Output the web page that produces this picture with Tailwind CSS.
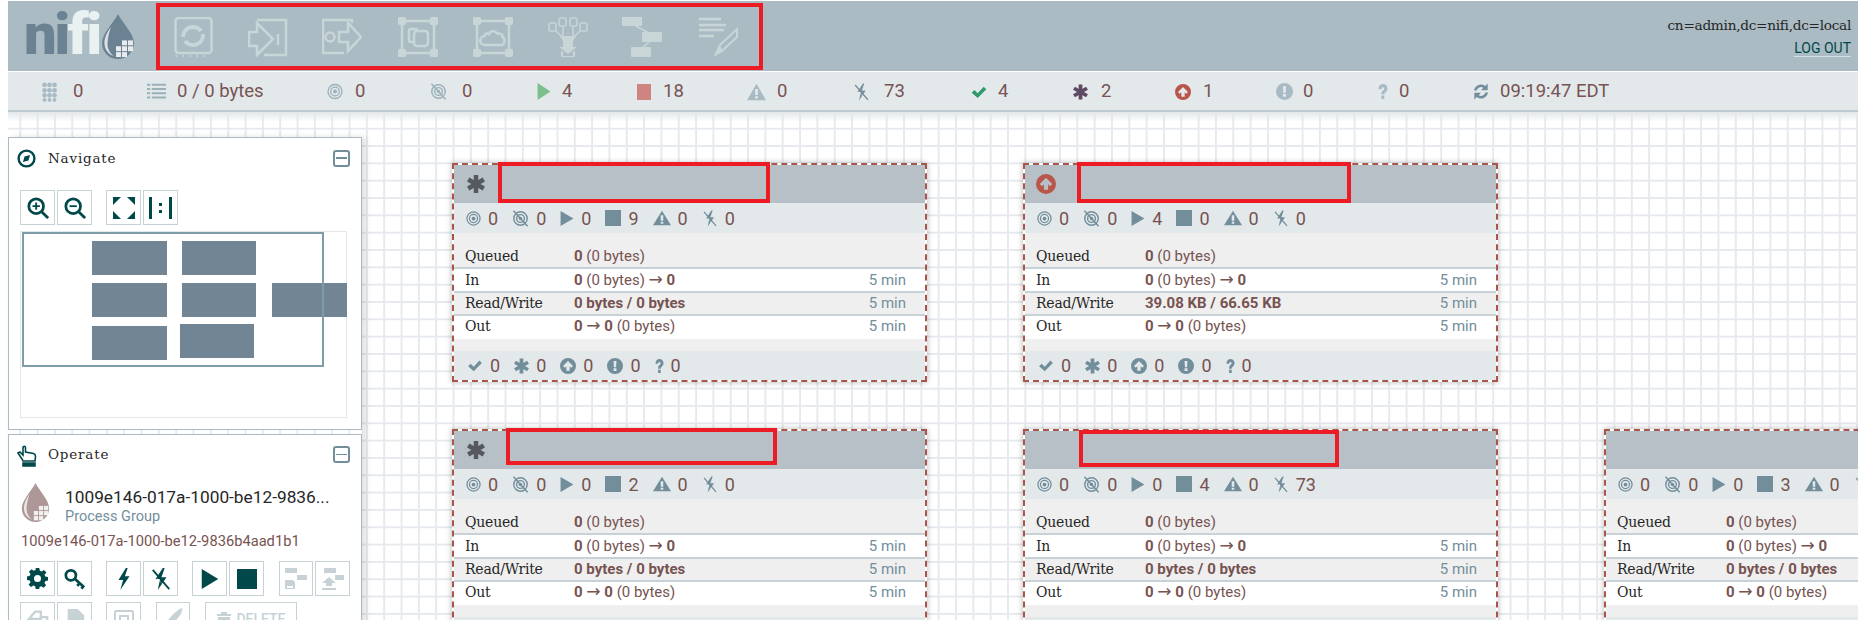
<!DOCTYPE html>
<html lang="en">
<head>
  <meta charset="UTF-8">
  <title>NiFi Flow</title>
  <script src="https://cdn.jsdelivr.net/npm/@tailwindcss/browser@4"></script>
</head>
<body class="bg-white font-['Roboto',sans-serif] overflow-hidden">
  <!-- Shared icons -->
  <svg class="hidden" xmlns="http://www.w3.org/2000/svg">
    <symbol id="target" viewBox="0 0 24 24"><g fill="none" stroke="currentColor" stroke-width="2"><circle cx="12" cy="12" r="10.500"/><circle cx="12" cy="12" r="6.500"/></g><circle cx="12" cy="12" r="3" fill="currentColor"/></symbol>
    <symbol id="target-off" viewBox="0 0 24 24"><g fill="none" stroke="currentColor" stroke-width="2"><circle cx="12" cy="12" r="9.500"/><circle cx="12" cy="12" r="5.500"/><path d="M2 1l20 22"/></g><circle cx="12" cy="12" r="2.500" fill="currentColor"/></symbol>
    <symbol id="play" viewBox="0 0 24 24" preserveAspectRatio="none"><path d="M1 0l22 12L1 24z" fill="currentColor"/></symbol>
    <symbol id="stop" viewBox="0 0 24 24" preserveAspectRatio="none"><rect width="24" height="24" fill="currentColor"/></symbol>
    <symbol id="warn" viewBox="0 0 24 24" preserveAspectRatio="none"><path fill-rule="evenodd" d="M12 1l12 22H0zM10.300 8v8h3.400V8zm0 9.500v3.300h3.400v-3.300z" fill="currentColor"/></symbol>
    <symbol id="bolt-off" viewBox="0 0 24 24"><path d="M14 0L6 12h5L8.500 24 18 10h-5.500L16 0z" fill="currentColor"/><path d="M3 2l18 21" stroke="currentColor" stroke-width="2"/><path d="M1 3l18 21" stroke="#ffffff" stroke-opacity=".35" stroke-width="1"/></symbol>
    <symbol id="bolt" viewBox="0 0 24 24"><path d="M14 0L6 13h5L8 24l10-15h-5l3-9z" fill="currentColor"/></symbol>
    <symbol id="check" viewBox="0 0 24 24"><path d="M1 13l4-4 5 5L19 4l4 4L10 21z" fill="currentColor"/></symbol>
    <symbol id="asterisk" viewBox="0 0 24 24"><path d="M12 0v24M1.600 6l20.800 12M22.400 6L1.600 18" fill="none" stroke="currentColor" stroke-width="6"/></symbol>
    <symbol id="up" viewBox="0 0 24 24"><path fill-rule="evenodd" d="M12 0a12 12 0 1 0 0 24a12 12 0 0 0 0-24zM12 4.500l7.500 7.500-2.700 2.700-2.300-2.300V19h-5v-6.600l-2.300 2.300L4.500 12z" fill="currentColor"/></symbol>
    <symbol id="exclaim" viewBox="0 0 24 24"><path fill-rule="evenodd" d="M12 0a12 12 0 1 0 0 24a12 12 0 0 0 0-24zM9.800 4.500h4.400l-.6 9.500h-3.200zm0 11h4.400v4h-4.400z" fill="currentColor"/></symbol>
    <symbol id="question" viewBox="3 0 19 24" preserveAspectRatio="none"><path d="M4 8c0-4.500 3.500-8 8.500-8C17.500 0 21 3 21 7c0 3.200-1.700 4.800-3.700 6.200-1.700 1.200-2.300 1.800-2.300 3.300H9.500c0-3.300 1.200-4.800 3-6.100 1.400-1 2.300-1.700 2.300-3 0-1.300-1-2.200-2.400-2.200-1.700 0-2.700 1.200-2.800 3zM9.500 18.500H15V24H9.500z" fill="currentColor"/></symbol>
    <symbol id="refresh" viewBox="0 0 24 24"><path d="M22 0v10h-10l3.500-3.500A6.800 6.800 0 0 0 5.300 10.500H1.500A10.500 10.500 0 0 1 18.300 3.700zM2 24V14h10l-3.500 3.500a6.800 6.800 0 0 0 10.200-4h3.800A10.500 10.500 0 0 1 5.700 20.300z" fill="currentColor"/></symbol>
    <symbol id="cluster" viewBox="0 0 20 24"><g fill="currentColor"><circle cx="4" cy="3.500" r="2.800"/><circle cx="10" cy="3.500" r="2.800"/><circle cx="16" cy="3.500" r="2.800"/><circle cx="4" cy="10" r="2.800"/><circle cx="10" cy="10" r="2.800"/><circle cx="16" cy="10" r="2.800"/><circle cx="4" cy="16" r="2.800"/><circle cx="10" cy="16" r="2.800"/><circle cx="16" cy="16" r="2.800"/><circle cx="4" cy="21.500" r="2.300"/><circle cx="10" cy="21.500" r="2.300"/><circle cx="16" cy="21.500" r="2.300"/></g></symbol>
    <symbol id="list" viewBox="0 0 24 24" preserveAspectRatio="none"><path d="M0 1h4v3H0zM6 1h18v3H6zM0 7h4v3H0zM6 7h18v3H6zM0 13h4v3H0zM6 13h18v3H6zM0 19h4v3H0zM6 19h18v3H6z" fill="currentColor"/></symbol>
    <symbol id="drop" viewBox="0 0 34 46" preserveAspectRatio="none"><path d="M17 0C12 10 1 20 1 30a16 16 0 0 0 32 0C33 20 22 10 17 0z" fill="currentColor"/><path d="M10 13C5 20 3 26 3.500 31c.5 6 4 10 9 12-3.500-3-6-7-6-12 0-6 1.500-12 3.500-18z" fill="#fff" opacity=".75"/><g fill="#fff" opacity=".85"><rect x="21" y="27" width="5" height="5"/><rect x="27" y="27" width="5" height="5"/><rect x="15" y="33" width="5" height="5"/><rect x="21" y="33" width="5" height="5"/><rect x="27" y="33" width="5" height="5"/><rect x="15" y="39" width="5" height="5"/><rect x="21" y="39" width="5" height="5"/></g></symbol>
  </svg>

  <div class="h-[620px] pl-[8px] pt-[1px] flex flex-col overflow-hidden">
    <!-- Header -->
    <header class="h-[70px] shrink-0 bg-[#aabbc3] flex relative">
      <div class="w-[148px] shrink-0 pl-[16px] pt-[2px] flex items-start">
        <div class="w-[75px] font-['Roboto',sans-serif] font-black text-[58px] leading-[62px] tracking-[-2.500px] whitespace-nowrap"><span class="text-[#6b8293]">ni</span><span class="text-[#eaf1f1]">fi</span></div>
        <svg class="w-[34px] h-[45px] mt-[11px] ml-[2px] text-[#6b8293]"><use href="#drop"/></svg>
      </div>
      <!-- Toolbar, redacted frame -->
      <div class="w-[607px] h-[67px] mt-[2px] border-[4px] border-[#ed1c24] flex items-center pl-[14px] text-[#c8d6d8]">
        <svg class="w-[40px] h-[40px] mr-[34px]" viewBox="0 0 40 40" fill="none" stroke="currentColor" stroke-width="2.500"><rect x="1.500" y="1" width="36" height="35" rx="3"/><path d="M2 38l.5 2M9 38l.5 2M16 38l.5 2M23 38l.5 2M30 38l.5 2" stroke-width="1.500"/><path d="M9 20a10 10 0 0 1 18-6M29 17a10 10 0 0 1-18 7" stroke-width="4"/></svg>
        <svg class="w-[40px] h-[40px] mr-[34px]" viewBox="0 0 40 40" fill="none" stroke="currentColor" stroke-width="2.500"><path d="M9 3h29v35H16"/><path d="M1 15h8V6l16 16-16 16v-9H1z"/><path d="M30 17v11"/></svg>
        <svg class="w-[40px] h-[40px] mr-[36px]" viewBox="0 0 40 40" fill="none" stroke="currentColor" stroke-width="2.500"><path d="M30 6V3H1v33h21"/><circle cx="8" cy="20" r="4.500"/><path d="M17 15h9V6l13 14-13 14v-9h-9z"/></svg>
        <svg class="w-[40px] h-[40px] mr-[35px]" viewBox="0 0 40 40" fill="none" stroke="currentColor" stroke-width="2.500"><path d="M7 4h26M7 36h26M4 7v26M36 7v26"/><rect x="1" y="1" width="6" height="6" rx="1.500" fill="currentColor"/><rect x="33" y="1" width="6" height="6" rx="1.500" fill="currentColor"/><rect x="1" y="33" width="6" height="6" rx="1.500" fill="currentColor"/><rect x="33" y="33" width="6" height="6" rx="1.500" fill="currentColor"/><path d="M20 12h-7a2 2 0 0 0-2 2v9a2 2 0 0 0 2 2h3"/><rect x="16" y="14" width="14" height="15" rx="3"/></svg>
        <svg class="w-[40px] h-[40px] mr-[35px]" viewBox="0 0 40 40" fill="none" stroke="currentColor" stroke-width="2.500"><path d="M7 4h26M7 36h26M4 7v26M36 7v26"/><rect x="1" y="1" width="6" height="6" rx="1.500" fill="currentColor"/><rect x="33" y="1" width="6" height="6" rx="1.500" fill="currentColor"/><rect x="1" y="33" width="6" height="6" rx="1.500" fill="currentColor"/><rect x="33" y="33" width="6" height="6" rx="1.500" fill="currentColor"/><path d="M12 28a4.500 4.500 0 0 1-.5-9c.5-3 3-3 4.500-2 1-3 6-4 8-.5 4-.5 6 1.500 5.500 3.500 3 1 2.500 8-1.500 8z"/></svg>
        <svg class="w-[40px] h-[40px] mr-[34px]" viewBox="0 0 40 40" fill="none" stroke="currentColor" stroke-width="1.500"><rect x="1" y="6" width="7" height="8" rx="1.500"/><rect x="11" y="1" width="7" height="8" rx="1.500"/><rect x="22" y="1" width="7" height="8" rx="1.500"/><rect x="32" y="6" width="7" height="8" rx="1.500"/><path d="M8 14l6 6M15 9v10M25 9v10M32 14l-6 6"/><path d="M12 19h16l-3 5v6h4l-9 7-9-7h4v-6z" fill="currentColor" stroke="none"/><path d="M14 34v6h12v-6" stroke-width="2"/></svg>
        <svg class="w-[40px] h-[40px] mr-[36px]" viewBox="0 0 40 40" fill="currentColor"><rect x="0" y="0" width="20" height="9" rx="1"/><rect x="20" y="15" width="20" height="10" rx="1"/><rect x="9" y="30" width="20" height="10" rx="1"/><path d="M14 9l13 7M27 25l-7 6" stroke="currentColor" stroke-width="1.500"/></svg>
        <svg class="w-[40px] h-[40px]" viewBox="0 0 40 40" fill="none" stroke="currentColor"><path d="M1 2h22M1 8h27M1 13h25M1 19h15" stroke-width="2.500"/><path d="M18 37l4-9 17-16v8L25 33z" stroke-width="2"/><path d="M18 38l7-4-4-5z" fill="currentColor"/></svg>
      </div>
      <div class="ml-auto pr-[7px] pt-[15px] flex flex-col items-end">
        <div class="font-['DejaVu_Serif',serif] text-[13.700px] leading-[18px] text-[#262626] tracking-[-.3px]">cn=admin,dc=nifi,dc=local</div>
        <div class="mt-[7px] text-[14px] leading-[15px] text-[#004849] border-b border-[#d5e0e4]">LOG OUT</div>
      </div>
    </header>

    <!-- Stats bar -->
    <div class="h-[40px] shrink-0 mt-[1px] pt-[1px] bg-[#e3e8eb] border-b-2 border-[#bccbd2] flex items-center pl-[32px] text-[18.500px] text-[#775351]">
      <div class="w-[107px] flex items-center gap-[14px]"><svg class="w-[19px] h-[20px] text-[#a8bac3]"><use href="#cluster"/></svg><span>0</span></div>
      <div class="w-[180px] flex items-center gap-[11px]"><svg class="w-[19px] h-[17px] text-[#9cb0ba]"><use href="#list"/></svg><span>0 / 0 bytes</span></div>
      <div class="w-[103px] flex items-center gap-[12px]"><svg class="w-[16px] h-[17px] text-[#9cb0ba]"><use href="#target"/></svg><span>0</span></div>
      <div class="w-[107px] flex items-center gap-[15px]"><svg class="w-[17px] h-[19px] text-[#9cb0ba]"><use href="#target-off"/></svg><span>0</span></div>
      <div class="w-[100px] flex items-center gap-[11px]"><svg class="w-[14px] h-[17px] text-[#7dbf8c]"><use href="#play"/></svg><span>4</span></div>
      <div class="w-[110px] flex items-center gap-[12px]"><svg class="w-[14px] h-[16px] text-[#ce8480]"><use href="#stop"/></svg><span>18</span></div>
      <div class="w-[106px] flex items-center gap-[11px]"><svg class="w-[19px] h-[18px] text-[#a8bac3]"><use href="#warn"/></svg><span>0</span></div>
      <div class="w-[118px] flex items-center gap-[14px]"><svg class="w-[17px] h-[20px] text-[#7a929e]"><use href="#bolt-off"/></svg><span>73</span></div>
      <div class="w-[102px] flex items-center gap-[11px]"><svg class="w-[16px] h-[16px] text-[#2f9a6c]"><use href="#check"/></svg><span>4</span></div>
      <div class="w-[102px] flex items-center gap-[13px]"><svg class="w-[15px] h-[16px] text-[#5d4a63]"><use href="#asterisk"/></svg><span>2</span></div>
      <div class="w-[101px] flex items-center gap-[12px]"><svg class="w-[16px] h-[16px] text-[#ba554a]"><use href="#up"/></svg><span>1</span></div>
      <div class="w-[102px] flex items-center gap-[10px]"><svg class="w-[17px] h-[17px] text-[#a8bac3]"><use href="#exclaim"/></svg><span>0</span></div>
      <div class="w-[95px] flex items-center gap-[11px]"><svg class="w-[10px] h-[15px] text-[#a8bac3]"><use href="#question"/></svg><span>0</span></div>
      <div class="flex items-center gap-[11px]"><svg class="w-[16px] h-[17px] text-[#728e9b]"><use href="#refresh"/></svg><span>09:19:47 EDT</span></div>
    </div>

    <!-- Canvas -->
    <main id="canvas" class="relative flex-1 overflow-hidden bg-white bg-[linear-gradient(to_right,#e6eaee_1.500px,transparent_1.500px),linear-gradient(to_bottom,#e6eaee_1.500px,transparent_1.500px)] bg-[length:17.330px_17.330px] bg-[position:-6px_-1.600px]">
      <div class="absolute top-0 left-0 right-0 h-[10px] bg-gradient-to-b from-[#e3e8eb] to-transparent"></div>
    </main>
  </div>

  <script>
    // Process groups on the canvas: position, title icon, redaction frame, counts
    const groups = [
      { pos: 'left-[444px] top-[51px]', frame: 'ml-[44px] w-[272px] -mt-[3px] h-[41px]', icon: 'asterisk', stats: [0, 0, 0, 9, 0, 0], rw: '0 bytes / 0 bytes' },
      { pos: 'left-[1015px] top-[51px]', frame: 'ml-[52px] w-[274px] -mt-[3px] h-[41px]', icon: 'up', stats: [0, 0, 4, 0, 0, 0], rw: '39.08 KB / 66.65 KB' },
      { pos: 'left-[444px] top-[317px]', frame: 'ml-[52px] w-[271px] -mt-[3px] h-[37px]', icon: 'asterisk', stats: [0, 0, 0, 2, 0, 0], rw: '0 bytes / 0 bytes' },
      { pos: 'left-[1015px] top-[317px]', frame: 'ml-[54px] w-[260px] -mt-[1px] h-[37px]', icon: '', stats: [0, 0, 0, 4, 0, 73], rw: '0 bytes / 0 bytes' },
      { pos: 'left-[1596px] top-[317px]', frame: '', icon: '', stats: [0, 0, 0, 3, 0, 0], rw: '0 bytes / 0 bytes' },
    ];
    const statIcons = [
      ['target', 'w-[15px] h-[15px]'], ['target-off', 'w-[17px] h-[17px]'], ['play', 'w-[14px] h-[15px]'],
      ['stop', 'w-[16px] h-[16px]'], ['warn', 'w-[18px] h-[16px]'], ['bolt-off', 'w-[16px] h-[17px]'],
    ];
    const footIcons = [
      ['check', 'w-[16px] h-[15px]'], ['asterisk', 'w-[15px] h-[16px]'], ['up', 'w-[16px] h-[16px]'],
      ['exclaim', 'w-[16px] h-[16px]'], ['question', 'w-[9px] h-[14px]'],
    ];
    const arrow = `<span class="font-['DejaVu_Sans',sans-serif] text-[17px] leading-none">→</span>`;

    function icon(name, cls) {
      return `<svg class="${cls}"><use href="#${name}"/></svg>`;
    }

    function row(cls, label, value, time) {
      return `<div class="${cls} flex items-center pl-[11px] pr-[19px]">
        <div class="w-[109px] font-['DejaVu_Serif',serif] text-[14px] text-[#262626] tracking-[-.2px] whitespace-nowrap">${label}</div>
        <div class="flex-1 text-[15px] text-[#775351] whitespace-nowrap">${value}</div>
        <div class="text-[15px] text-[#728e9b]">${time}</div>
      </div>`;
    }

    const canvas = document.getElementById('canvas');
    groups.forEach(g => {
      const card = document.createElement('div');
      card.className = `absolute ${g.pos} w-[475px] h-[219px] border-2 border-dashed border-[#a8564c] bg-white shadow-[0_0_6px_rgba(0,0,0,.3)]`;
      const titleIcon = g.icon === 'asterisk'
        ? icon('asterisk', 'absolute left-[13px] top-[10px] w-[18px] h-[18px] text-[#55585c]')
        : g.icon === 'up' ? icon('up', 'absolute left-[11px] top-[9px] w-[20px] h-[20px] text-[#ba554a]') : '';
      const frame = g.frame ? `<div class="${g.frame} relative shrink-0 border-[4px] border-[#ed1c24]"></div>` : '';
      card.innerHTML = `
        <div class="relative flex items-start h-[38px] bg-[#b7bfc7]">${titleIcon}${frame}</div>
        <div class="h-[30px] bg-[#e3e8eb] flex items-center pl-[12px] text-[18px] text-[#775351]">
          ${g.stats.map((n, i) => `<div class="flex items-center gap-[7px] mr-[14px]">${icon(statIcons[i][0], statIcons[i][1] + ' text-[#728e9b]')}<span>${n}</span></div>`).join('')}
        </div>
        <div class="h-[36px] bg-[#efefef] flex items-end border-b-2 border-[#c7d2d7]"><div class="w-full">${row('h-[22px]', 'Queued', '<b>0</b> (0 bytes)', '')}</div></div>
        ${row('bg-white h-[22px]', 'In', `<b>0</b> (0 bytes) ${arrow} <b>0</b>`, '5 min')}
        <div class="border-t-2 border-[#c7d2d7]">${row('bg-[#efefef] h-[21px]', 'Read/Write', `<b>${g.rw}</b>`, '5 min')}</div>
        <div class="border-t-2 border-[#c7d2d7]">${row('bg-white h-[23px] pb-[3px]', 'Out', `<b>0</b> ${arrow} <b>0</b> (0 bytes)`, '5 min')}</div>
        <div class="h-[12px] bg-[#efefef]"></div>
        <div class="h-[29px] bg-[#e3e8eb] flex items-center pl-[13px] text-[18px] text-[#775351]">
          ${footIcons.map(f => `<div class="flex items-center gap-[7px] mr-[14px]">${icon(f[0], f[1] + ' text-[#728e9b]')}<span>0</span></div>`).join('')}
        </div>`;
      canvas.appendChild(card);
    });
  </script>

  <!-- Floating palettes -->
  <div class="absolute left-[8px] top-[137px] w-[354px] flex flex-col gap-[4px] shadow-[4px_0_6px_rgba(0,0,0,.12)]">
    <section class="h-[293px] bg-white border border-[#aabbc3] pl-[11px] pr-[10px]">
      <div class="flex items-center h-[40px]">
        <svg class="w-[19px] h-[19px] ml-[-3px] text-[#004849]" viewBox="0 0 24 24"><circle cx="12" cy="12" r="10" fill="none" stroke="currentColor" stroke-width="3"/><path d="M16.500 7.500l-7 2-2 7 7-2z" fill="currentColor"/></svg>
        <span class="ml-[12px] font-['DejaVu_Serif',serif] text-[13.500px] tracking-[.8px] text-[#262626]">Navigate</span>
        <div class="ml-auto w-[17px] h-[17px] mr-[1px] border-2 border-[#728e9b] rounded-[3px] flex items-center justify-center"><div class="w-[11px] h-[1.500px] bg-[#728e9b]"></div></div>
      </div>
      <div class="flex mt-[12px]">
        <div class="w-[35px] h-[35px] border border-[#c7d2d7] flex items-center justify-center mr-[2px]"><svg class="w-[22px] h-[22px] text-[#004849]" viewBox="0 0 24 24" fill="none" stroke="currentColor" stroke-width="3"><circle cx="10" cy="10" r="8"/><path d="M16 16l7 7"/><path d="M6 10h8M10 6v8" stroke-width="2"/></svg></div>
        <div class="w-[35px] h-[35px] border border-[#c7d2d7] flex items-center justify-center mr-[14px]"><svg class="w-[22px] h-[22px] text-[#004849]" viewBox="0 0 24 24" fill="none" stroke="currentColor" stroke-width="3"><circle cx="10" cy="10" r="8"/><path d="M16 16l7 7"/><path d="M6 10h8" stroke-width="2"/></svg></div>
        <div class="w-[35px] h-[35px] border border-[#c7d2d7] flex items-center justify-center mr-[2px]"><svg class="w-[22px] h-[22px] text-[#004849]" viewBox="0 0 22 22" fill="currentColor"><path d="M0 0h8L0 8zM22 0v8L14 0zM0 22v-8l8 8zM22 22h-8l8-8z"/></svg></div>
        <div class="w-[35px] h-[35px] border border-[#c7d2d7] flex items-center justify-center"><svg class="w-[23px] h-[22px] text-[#004849]" viewBox="0 0 23 22" fill="currentColor"><rect x="0" y="0" width="3" height="22"/><rect x="20" y="0" width="3" height="22"/><rect x="10" y="6" width="3" height="3"/><rect x="10" y="13" width="3" height="3"/></svg></div>
      </div>
      <!-- Birdseye -->
      <div class="relative w-[327px] h-[187px] mt-[6px] border border-[#e3e8eb]">
        <div class="absolute left-[1px] top-0 w-[302px] h-[135px] border-2 border-[#7f9ca9] z-10"></div>
        <div class="absolute left-[71px] top-[9px] w-[75px] h-[34px] bg-[#728595]"></div>
        <div class="absolute left-[161px] top-[9px] w-[74px] h-[34px] bg-[#728595]"></div>
        <div class="absolute left-[71px] top-[51px] w-[75px] h-[34px] bg-[#728595]"></div>
        <div class="absolute left-[161px] top-[51px] w-[74px] h-[34px] bg-[#728595]"></div>
        <div class="absolute left-[251px] top-[51px] w-[75px] h-[34px] bg-[#728595]"></div>
        <div class="absolute left-[71px] top-[94px] w-[75px] h-[34px] bg-[#728595]"></div>
        <div class="absolute left-[159px] top-[92px] w-[74px] h-[34px] bg-[#728595]"></div>
      </div>
    </section>
    <section class="h-[200px] bg-white border border-[#aabbc3] pl-[11px] pr-[10px]">
      <div class="flex items-center h-[38px]">
        <svg class="w-[20px] h-[22px] ml-[-3px] mt-[3px] text-[#004849]" viewBox="0 0 20 22" fill="none" stroke="currentColor" stroke-width="1.600"><path d="M5 14L1 8l2-1 3 3V2.500a1.200 1.200 0 0 1 2.500 0V7l8 1.500c1.500.5 2 1.500 2 3L18 16H6z"/><path d="M6 18h12v3H6z" fill="currentColor"/></svg>
        <span class="ml-[11px] font-['DejaVu_Serif',serif] text-[13.500px] tracking-[.8px] text-[#262626]">Operate</span>
        <div class="ml-auto w-[17px] h-[17px] mr-[1px] mt-[1px] border-2 border-[#728e9b] rounded-[3px] flex items-center justify-center"><div class="w-[11px] h-[1.500px] bg-[#728e9b]"></div></div>
      </div>
      <div class="flex mt-[14px] h-[40px]">
        <svg class="w-[29px] h-[39px] -mt-[4px] ml-[1px] shrink-0 text-[#ad9897]"><use href="#drop"/></svg>
        <div class="ml-[15px] w-[280px]">
          <div class="text-[17.300px] leading-[20px] text-[#262626] whitespace-nowrap">1009e146-017a-1000-be12-9836...</div>
          <div class="text-[14.500px] leading-[19px] text-[#728e9b]">Process Group</div>
        </div>
      </div>
      <div class="mt-[5px] ml-[1px] text-[14.700px] leading-[18px] text-[#775351] whitespace-nowrap">1009e146-017a-1000-be12-9836b4aad1b1</div>
      <div class="flex mt-[11px] text-[#004849]">
        <div class="w-[35px] h-[35px] border border-[#c7d2d7] flex items-center justify-center mr-[2px]"><svg class="w-[21px] h-[21px]" viewBox="0 0 24 24"><path fill-rule="evenodd" fill="currentColor" d="M10 0h4l.7 3.200 2 .8 2.700-1.800 2.800 2.800L20 7.700l.8 2 3.200.7v4l-3.200.7-.8 2 1.800 2.700-2.800 2.800-2.700-1.800-2 .8L14 24h-4l-.7-3.200-2-.8-2.700 1.800-2.800-2.800L4 16.300l-.8-2L0 13.600v-4l3.200-.7.8-2-1.800-2.700 2.800-2.800L7.700 3.200l2-.8zM12 8a4 4 0 1 0 0 8 4 4 0 0 0 0-8z"/></svg></div>
        <div class="w-[35px] h-[35px] border border-[#c7d2d7] flex items-center justify-center mr-[14px]"><svg class="w-[22px] h-[22px]" viewBox="0 0 24 24" fill="none" stroke="currentColor" stroke-width="3"><circle cx="7.500" cy="8" r="5.500"/><path d="M12 12l10 9M17 16.500l-2.500 3M21 20l-2 2.500"/></svg></div>
        <div class="w-[35px] h-[35px] border border-[#c7d2d7] flex items-center justify-center mr-[2px]"><svg class="w-[22px] h-[22px]"><use href="#bolt"/></svg></div>
        <div class="w-[35px] h-[35px] border border-[#c7d2d7] flex items-center justify-center mr-[14px]"><svg class="w-[22px] h-[22px]"><use href="#bolt-off"/></svg></div>
        <div class="w-[35px] h-[35px] border border-[#c7d2d7] flex items-center justify-center mr-[2px]"><svg class="w-[18px] h-[20px]"><use href="#play"/></svg></div>
        <div class="w-[35px] h-[35px] border border-[#c7d2d7] flex items-center justify-center mr-[15px]"><svg class="w-[20px] h-[20px]"><use href="#stop"/></svg></div>
        <div class="w-[34px] h-[35px] border border-[#c7d2d7] flex items-center justify-center mr-[2px] text-[#c7d2d7]"><svg class="w-[24px] h-[24px]" viewBox="0 0 24 24" fill="currentColor"><rect x="1" y="1" width="12" height="5"/><rect x="13" y="8" width="10" height="5"/><path d="M1 13h8l2 2v7H1zM3 19h6v2H3z" fill-rule="evenodd"/></svg></div>
        <div class="w-[35px] h-[35px] border border-[#c7d2d7] flex items-center justify-center text-[#c7d2d7]"><svg class="w-[24px] h-[24px]" viewBox="0 0 24 24" fill="currentColor"><rect x="3" y="1" width="12" height="5"/><rect x="14" y="8" width="9" height="5"/><path d="M8 10l7 6h-4v3H5v-3H1zM1 21h14v2H1z"/></svg></div>
      </div>
      <div class="flex mt-[6px] text-[#c7d2d7]">
        <div class="w-[35px] h-[35px] border border-[#c7d2d7] mr-[2px] flex justify-center pt-[5px]"><svg class="w-[22px] h-[22px]" viewBox="0 0 24 24" fill="none" stroke="currentColor" stroke-width="2.500"><path d="M2 12l7-8h6v8H9zM14 10h8v12H10v-6"/></svg></div>
        <div class="w-[35px] h-[35px] border border-[#c7d2d7] mr-[14px] flex justify-center pt-[5px]"><svg class="w-[22px] h-[22px]" viewBox="0 0 24 24" fill="currentColor"><path d="M4 1h11l7 7v15H4z"/></svg></div>
        <div class="w-[35px] h-[35px] border border-[#c7d2d7] mr-[15px] flex justify-center pt-[4px]"><svg class="w-[24px] h-[24px]" viewBox="0 0 24 24" fill="none" stroke="currentColor" stroke-width="2"><path d="M3 4h18M3 22h18M3 4v18M21 4v18"/><rect x="8" y="9" width="8" height="8"/></svg></div>
        <div class="w-[34px] h-[35px] border border-[#c7d2d7] mr-[15px] flex justify-center pt-[4px]"><svg class="w-[22px] h-[22px]" viewBox="0 0 24 24" fill="currentColor"><path d="M22 1c1 6-6 13-12 18l-4-4C11 9 16 3 22 1zM4 17l3 3-5 3z"/></svg></div>
        <div class="w-[92px] h-[35px] border border-[#c7d2d7] flex items-center justify-center gap-[4px]"><svg class="w-[16px] h-[18px]" viewBox="0 0 16 18" fill="currentColor"><path d="M1 3h14v2H1zM5 1h6v2H5zM2 6h12v12H2z"/></svg><span class="text-[14px] font-medium">DELETE</span></div>
      </div>
    </section>
  </div>
</body>
</html>
